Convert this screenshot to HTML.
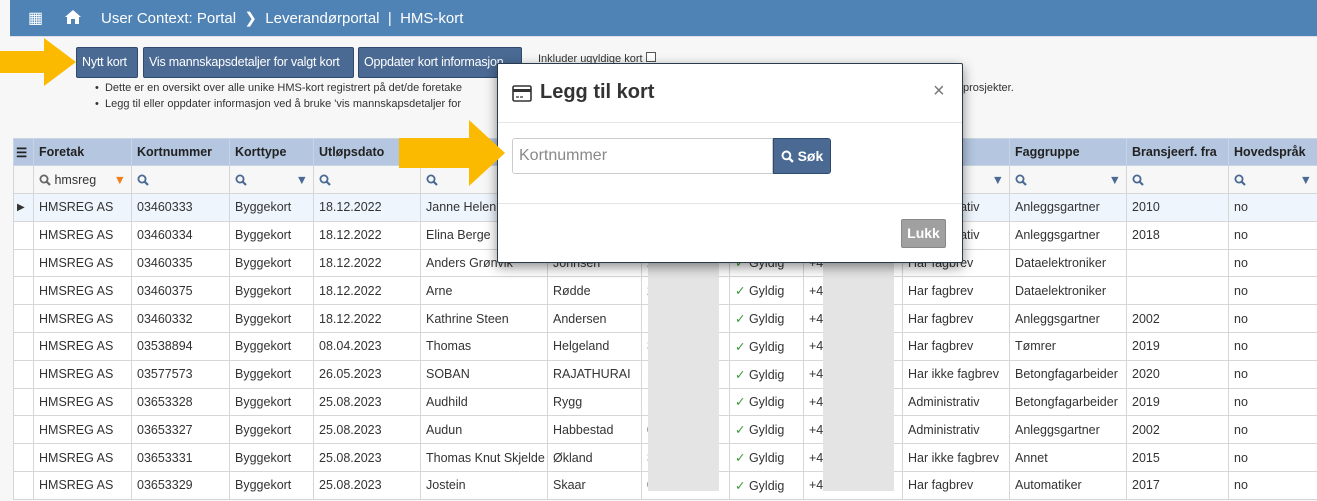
<!DOCTYPE html>
<html><head><meta charset="utf-8"><style>
*{box-sizing:border-box;margin:0;padding:0}
body{width:1317px;height:501px;overflow:hidden;background:#f7f7f7;font-family:"Liberation Sans",sans-serif;font-size:12.5px;color:#333;position:relative}
.top{position:absolute;left:10px;top:0;width:1307px;height:37px;background:#4f83b5;border-bottom:1px solid #dde;color:#fff;font-size:15px}
.top span{position:absolute;top:9px}
.btn{position:absolute;top:47px;height:31px;background:#4a6a94;border:1px solid #2f4a6e;color:#fff;font-size:12.5px;line-height:29px;padding:0 5px;border-radius:2px;white-space:nowrap;overflow:hidden;letter-spacing:-0.2px}
.note{position:absolute;left:95px;font-size:11px;color:#333}
table{position:absolute;left:13px;top:138px;border-collapse:collapse;table-layout:fixed;width:1304px}
td,th{border:1px solid #d6d6d6;padding:0 5px;text-align:left;white-space:nowrap;overflow:hidden;height:27.8px;font-size:12.5px}
th{background:#b4c6e0;font-weight:bold;color:#222;height:27px;border-color:#c8d4e4}
tr.f td{background:#f7f7f7;height:28px;color:#4a6a94}
tr.d td{background:#fff}
tr.sel td{background:#eef5fd}
.fl{float:right;color:#4a6a94}
.chk{color:#3a9a3a}
.mask{position:absolute;background:#e4e4e4}
.mg{display:inline-block;width:12px;height:12px;vertical-align:-2px}
.modal{position:absolute;left:497px;top:63px;width:466px;height:200px;background:#fff;border:1px solid #2b3a4a;box-shadow:0 4px 12px rgba(0,0,0,.45);border-radius:2px}
</style></head><body>
<svg width="0" height="0" style="position:absolute"><defs><symbol id="m" viewBox="0 0 12 12"><circle cx="5" cy="5" r="3.6" fill="none" stroke="currentColor" stroke-width="1.8"/><path d="M7.6 7.6L11 11" stroke="currentColor" stroke-width="2.2"/></symbol></defs></svg>
<div class="top">
<span style="left:18px;top:8px;font-size:16px">&#9638;</span>
<svg style="position:absolute;left:55px;top:10px" width="16" height="14" viewBox="0 0 16 14"><path d="M8 0L0 7h2v7h4V9h4v5h4V7h2z" fill="#fff"/></svg>
<span style="left:91px">User Context: Portal &nbsp;❯&nbsp; Leverandørportal &nbsp;|&nbsp; HMS-kort</span>
</div>
<div class="btn" style="left:76px;width:62px">Nytt kort</div>
<div class="btn" style="left:143px;width:211px">Vis mannskapsdetaljer for valgt kort</div>
<div class="btn" style="left:358px;width:164px">Oppdater kort informasjon</div>
<div style="position:absolute;left:538px;top:52px;font-size:11px">Inkluder ugyldige kort <span style="display:inline-block;width:10px;height:10px;border:1px solid #555;background:#fff"></span></div>
<div class="note" style="top:82px">•&nbsp; Dette er en oversikt over alle unike HMS-kort registrert på det/de foretake</div>
<div class="note" style="top:98px">•&nbsp; Legg til eller oppdater informasjon ved å bruke 'vis mannskapsdetaljer for</div>
<div class="note" style="top:82px;left:963px">prosjekter.</div>
<table>
<colgroup><col style="width:20px"><col style="width:98px"><col style="width:98px"><col style="width:84px"><col style="width:107px"><col style="width:127px"><col style="width:94px"><col style="width:88px"><col style="width:74px"><col style="width:99px"><col style="width:107px"><col style="width:117px"><col style="width:102px"><col style="width:89px"></colgroup>
<tr><th style="padding:0 2px">☰</th><th>Foretak</th><th>Kortnummer</th><th>Korttype</th><th>Utløpsdato</th><th></th><th></th><th></th><th></th><th></th><th></th><th>Faggruppe</th><th>Bransjeerf. fra</th><th>Hovedspråk</th></tr>
<tr class="f"><td></td><td><svg class="mg" style="color:#666"><use href="#m"/></svg> <span style="color:#333">hmsreg</span><span class="fl" style="color:#f07e1a">▼</span></td><td><svg class="mg"><use href="#m"/></svg></td><td><svg class="mg"><use href="#m"/></svg><span class="fl">▼</span></td><td><svg class="mg"><use href="#m"/></svg></td><td><svg class="mg"><use href="#m"/></svg></td><td></td><td></td><td></td><td></td><td><span class="fl">▼</span></td><td><svg class="mg"><use href="#m"/></svg><span class="fl">▼</span></td><td><svg class="mg"><use href="#m"/></svg></td><td><svg class="mg"><use href="#m"/></svg><span class="fl">▼</span></td></tr>
<tr class="d sel"><td style="padding:0 3px;font-size:10px">▶</td><td>HMSREG AS</td><td>03460333</td><td>Byggekort</td><td>18.12.2022</td><td>Janne Helen</td><td></td><td></td><td></td><td></td><td>Administrativ</td><td>Anleggsgartner</td><td>2010</td><td>no</td></tr>
<tr class="d"><td></td><td>HMSREG AS</td><td>03460334</td><td>Byggekort</td><td>18.12.2022</td><td>Elina Berge</td><td></td><td></td><td></td><td></td><td>Administrativ</td><td>Anleggsgartner</td><td>2018</td><td>no</td></tr>
<tr class="d"><td></td><td>HMSREG AS</td><td>03460335</td><td>Byggekort</td><td>18.12.2022</td><td>Anders Grønvik</td><td>Johnsen</td><td>2</td><td><span class="chk">✓</span> Gyldig</td><td>+47</td><td>Har fagbrev</td><td>Dataelektroniker</td><td></td><td>no</td></tr>
<tr class="d"><td></td><td>HMSREG AS</td><td>03460375</td><td>Byggekort</td><td>18.12.2022</td><td>Arne</td><td>Rødde</td><td>2</td><td><span class="chk">✓</span> Gyldig</td><td>+47</td><td>Har fagbrev</td><td>Dataelektroniker</td><td></td><td>no</td></tr>
<tr class="d"><td></td><td>HMSREG AS</td><td>03460332</td><td>Byggekort</td><td>18.12.2022</td><td>Kathrine Steen</td><td>Andersen</td><td>1</td><td><span class="chk">✓</span> Gyldig</td><td>+47</td><td>Har fagbrev</td><td>Anleggsgartner</td><td>2002</td><td>no</td></tr>
<tr class="d"><td></td><td>HMSREG AS</td><td>03538894</td><td>Byggekort</td><td>08.04.2023</td><td>Thomas</td><td>Helgeland</td><td>3</td><td><span class="chk">✓</span> Gyldig</td><td>+47</td><td>Har fagbrev</td><td>Tømrer</td><td>2019</td><td>no</td></tr>
<tr class="d"><td></td><td>HMSREG AS</td><td>03577573</td><td>Byggekort</td><td>26.05.2023</td><td>SOBAN</td><td>RAJATHURAI</td><td>1</td><td><span class="chk">✓</span> Gyldig</td><td>+47</td><td>Har ikke fagbrev</td><td>Betongfagarbeider</td><td>2020</td><td>no</td></tr>
<tr class="d"><td></td><td>HMSREG AS</td><td>03653328</td><td>Byggekort</td><td>25.08.2023</td><td>Audhild</td><td>Rygg</td><td>1</td><td><span class="chk">✓</span> Gyldig</td><td>+47</td><td>Administrativ</td><td>Betongfagarbeider</td><td>2019</td><td>no</td></tr>
<tr class="d"><td></td><td>HMSREG AS</td><td>03653327</td><td>Byggekort</td><td>25.08.2023</td><td>Audun</td><td>Habbestad</td><td>0</td><td><span class="chk">✓</span> Gyldig</td><td>+47</td><td>Administrativ</td><td>Anleggsgartner</td><td>2002</td><td>no</td></tr>
<tr class="d"><td></td><td>HMSREG AS</td><td>03653331</td><td>Byggekort</td><td>25.08.2023</td><td>Thomas Knut Skjelde</td><td>Økland</td><td>3</td><td><span class="chk">✓</span> Gyldig</td><td>+47</td><td>Har ikke fagbrev</td><td>Annet</td><td>2015</td><td>no</td></tr>
<tr class="d"><td></td><td>HMSREG AS</td><td>03653329</td><td>Byggekort</td><td>25.08.2023</td><td>Jostein</td><td>Skaar</td><td>0</td><td><span class="chk">✓</span> Gyldig</td><td>+47</td><td>Har fagbrev</td><td>Automatiker</td><td>2017</td><td>no</td></tr>
</table>
<div class="mask" style="left:648px;top:255px;width:71px;height:236px"></div>
<div class="mask" style="left:823px;top:255px;width:71px;height:236px"></div>
<div class="modal">
<svg style="position:absolute;left:14px;top:21px" width="20" height="17" viewBox="0 0 20 17"><rect x="1" y="1" width="18" height="15" rx="1.5" fill="none" stroke="#333" stroke-width="1.6"/><rect x="1" y="4" width="18" height="3" fill="#333"/><path d="M4 12h3M8 12h3" stroke="#333" stroke-width="1.2"/></svg>
<div style="position:absolute;left:42px;top:17px;font-size:20px;font-weight:bold;color:#333">Legg til kort</div>
<div style="position:absolute;left:435px;top:16px;font-size:20px;color:#777">×</div>
<div style="position:absolute;left:0;right:0;top:58px;border-top:1px solid #e5e5e5"></div>
<div style="position:absolute;left:14px;top:74px;width:261px;height:36px;border:1px solid #ccc;border-radius:3px 0 0 3px;font-size:16px;color:#888;padding:8px 6px">Kortnummer</div>
<div style="position:absolute;left:275px;top:74px;width:58px;height:36px;background:#4a6a94;border:1px solid #2f4a6e;color:#fff;font-size:14px;line-height:34px;text-align:center;font-weight:bold;border-radius:0 3px 3px 0"><svg style="width:13px;height:13px;vertical-align:-2px;color:#fff"><use href="#m"/></svg> Søk</div>
<div style="position:absolute;left:0;right:0;top:139px;border-top:1px solid #e5e5e5"></div>
<div style="position:absolute;left:403px;top:155px;width:45px;height:29px;background:#a0a0a0;border:1px solid #888;color:#fff;font-size:14px;line-height:27px;text-align:center;border-radius:2px;font-weight:bold">Lukk</div>
</div>
<svg style="position:absolute;left:0;top:38px" width="78" height="48"><polygon points="0,13 44,13 44,0 76,24 44,48 44,35 0,35" fill="#fbb900"/></svg>
<svg style="position:absolute;left:399px;top:120px" width="108" height="66"><polygon points="0,18 70,18 70,0 106,33 70,66 70,48 0,48" fill="#fbb900"/></svg>
</body></html>
